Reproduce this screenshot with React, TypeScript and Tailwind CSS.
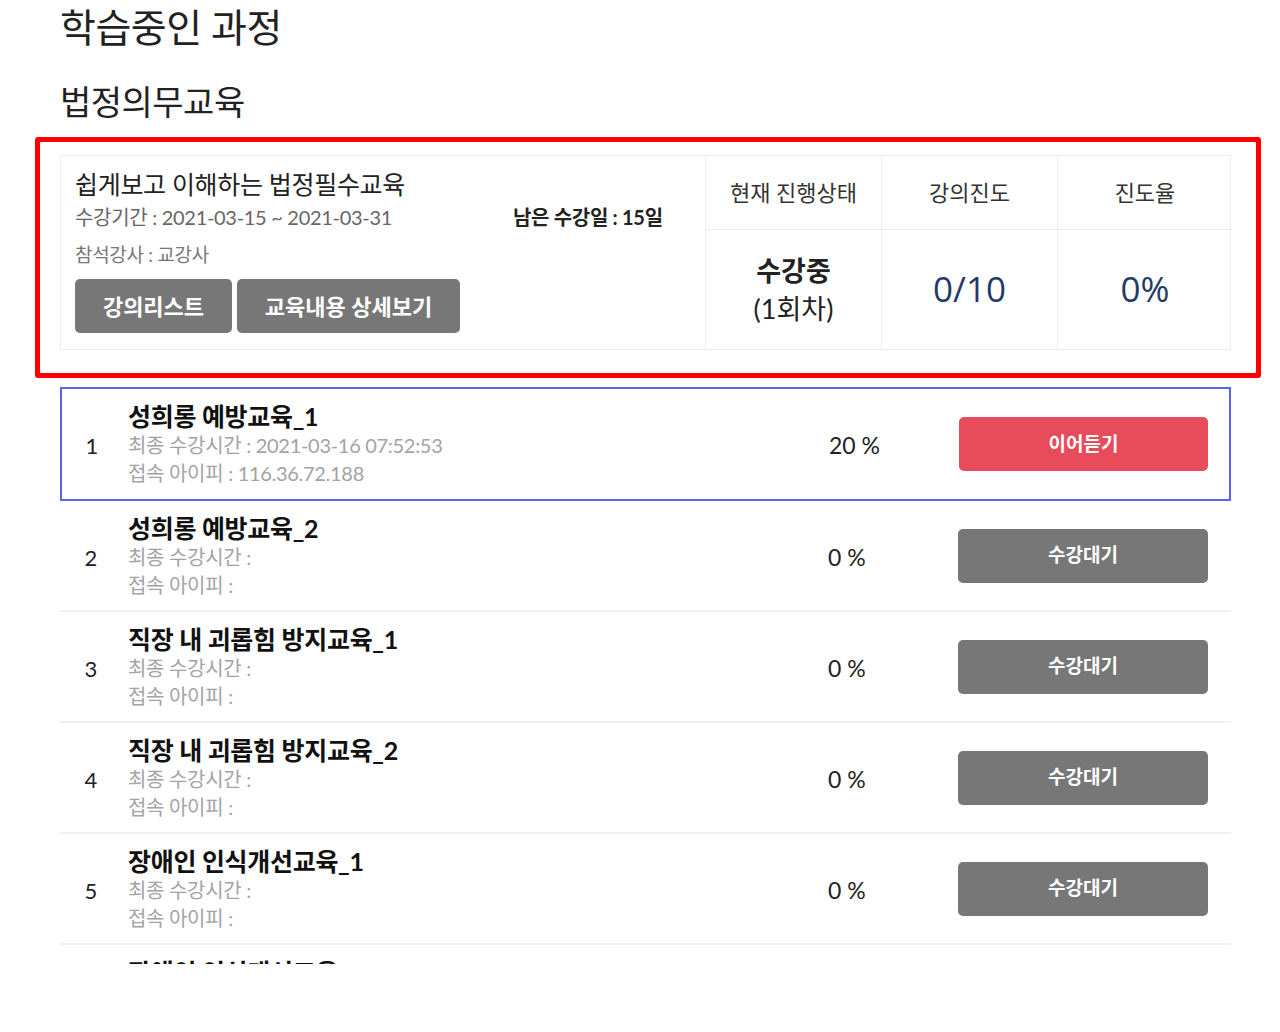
import React from 'react'

const base = "font-['Lato','Noto_Sans_CJK_KR',sans-serif]"

interface Lecture {
  no: number
  title: string
  lastTime: string
  ip: string
  rate: string
  active?: boolean
}

const lectures: Lecture[] = [
  { no: 1, title: '성희롱 예방교육_1', lastTime: '2021-03-16 07:52:53', ip: '116.36.72.188', rate: '20 %', active: true },
  { no: 2, title: '성희롱 예방교육_2', lastTime: '', ip: '', rate: '0 %' },
  { no: 3, title: '직장 내 괴롭힘 방지교육_1', lastTime: '', ip: '', rate: '0 %' },
  { no: 4, title: '직장 내 괴롭힘 방지교육_2', lastTime: '', ip: '', rate: '0 %' },
  { no: 5, title: '장애인 인식개선교육_1', lastTime: '', ip: '', rate: '0 %' },
  { no: 6, title: '장애인 인식개선교육_2', lastTime: '', ip: '', rate: '0 %' },
]

function LectureRow({ item }: { item: Lecture }) {
  return (
    <div
      className={
        item.active
          ? 'flex items-center h-[114px] border-2 border-[#5a63ee] pr-[21px]'
          : 'flex items-center h-[111px] border-b-2 border-[#eef2f7] pr-[23px]'
      }
    >
      <div className={item.active ? 'w-[60px] text-center text-[22px] text-[#222] pt-[3px]' : 'w-[62px] text-center text-[22px] text-[#222] pt-[3px]'}>
        {item.no}
      </div>
      <div className="flex-1 pl-[6px]">
        <div className="text-[25px] font-bold text-[#111] leading-[30px] tracking-[-0.3px]">{item.title}</div>
        <div className="text-[20px] text-[#a3a3a3] leading-[28px] tracking-[-0.3px]">최종 수강시간 : {item.lastTime}</div>
        <div className="text-[20px] text-[#a3a3a3] leading-[28px] tracking-[-0.3px]">접속 아이피 : {item.ip}</div>
      </div>
      <div className="w-[130px] text-[23px] text-[#222] pt-[3px]">{item.rate}</div>
      <button
        className={
          item.active
            ? 'w-[249px] h-[54px] rounded-[5px] bg-[#e84b5a] text-white text-[19px] font-bold'
            : 'w-[250px] h-[54px] rounded-[5px] bg-[#777777] text-white text-[19px] font-bold'
        }
      >
        {item.active ? '이어듣기' : '수강대기'}
      </button>
    </div>
  )
}

export default function App() {
  return (
    <div className={`${base} w-[1280px] h-[1032px] bg-white overflow-hidden`}>
      <div className="ml-[60px] w-[1171px]">
        <h1 className="pt-[4px] text-[39px] leading-[46px] text-[#222] tracking-[-0.5px]">학습중인 과정</h1>
        <h2 className="mt-[32px] text-[34px] leading-[40px] text-[#222] tracking-[-0.5px]">법정의무교육</h2>

        {/* highlighted course box */}
        <div className="mt-[15px] -ml-[25px] w-[1226px] border-[5px] border-[#ff0000] rounded-[3px] pt-[13px] pl-[20px] pr-[25px] pb-[23px]">
          <div className="grid grid-cols-[645px_176px_176px_174px] grid-rows-[74px_119px] border border-[#e9eef5]">
            <div className="row-span-2 border-r border-[#e9eef5] pl-[14px] pt-[11px]">
              <div className="text-[25px] leading-[34px] text-[#222] tracking-[-0.3px]">쉽게보고 이해하는 법정필수교육</div>
              <div className="flex text-[20px] leading-[32px] tracking-[-0.3px]">
                <span className="w-[438px] text-[#666]">수강기간 : 2021-03-15 ~ 2021-03-31</span>
                <span className="font-bold text-[#222]">남은 수강일 : 15일</span>
              </div>
              <div className="mt-[7px] text-[19px] leading-[30px] text-[#777] tracking-[-0.3px]">참석강사 : 교강사</div>
              <div className="mt-[9px] flex gap-[5px]">
                <button className="w-[157px] h-[54px] rounded-[5px] bg-[#777777] text-white text-[22px] font-bold">강의리스트</button>
                <button className="w-[223px] h-[54px] rounded-[5px] bg-[#777777] text-white text-[22px] font-bold">교육내용 상세보기</button>
              </div>
            </div>
            <div className="flex items-center justify-center border-r border-b border-[#e9eef5] text-[22px] text-[#333]">현재 진행상태</div>
            <div className="flex items-center justify-center border-r border-b border-[#e9eef5] text-[22px] text-[#333]">강의진도</div>
            <div className="flex items-center justify-center border-b border-[#e9eef5] text-[22px] text-[#333]">진도율</div>
            <div className="flex flex-col items-center justify-center border-r border-[#e9eef5] text-[#222]">
              <div className="text-[27px] font-bold leading-[38px]">수강중</div>
              <div className="text-[27px] leading-[38px]">(1회차)</div>
            </div>
            <div className="flex items-center justify-center border-r border-[#e9eef5] font-['Open_Sans',sans-serif] text-[35px] text-[#1f3a68]">0/10</div>
            <div className="flex items-center justify-center font-['Open_Sans',sans-serif] text-[35px] text-[#1f3a68]">0%</div>
          </div>
        </div>

        {/* lecture list */}
        <div className="mt-[9px] h-[577px] overflow-hidden">
          {lectures.map((l) => (
            <LectureRow key={l.no} item={l} />
          ))}
        </div>
      </div>
    </div>
  )
}
